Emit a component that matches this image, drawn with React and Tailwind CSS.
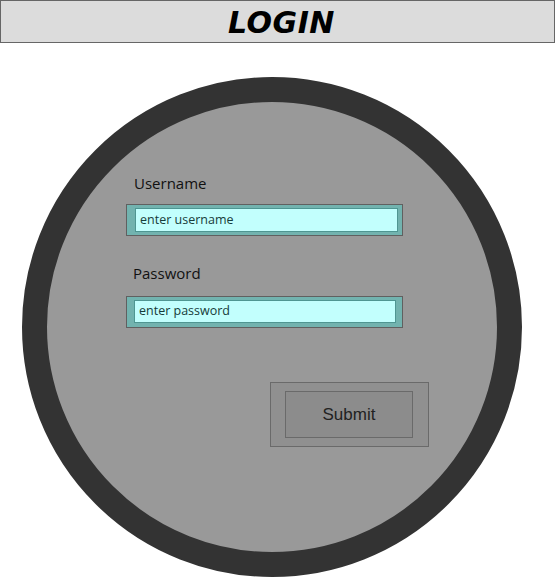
export default function App() {
  return (
    <div className="w-[556px] h-[578px] bg-white overflow-hidden">
      <div className="h-[43px] w-[555px] bg-[#dcdcdc] border border-[#666666] flex items-center justify-center pl-[8px] pt-[2px]">
        <h1 className="text-[30px] leading-none font-bold italic text-black tracking-[0.5px]" style={{ fontFamily: '"DejaVu Sans", sans-serif' }}>
          LOGIN
        </h1>
      </div>
      <div className="ml-[22px] mt-[34px] w-[500px] h-[500px] rounded-full border-[25px] border-[#333333] bg-[#999999]">
        <div className="flex flex-col pt-[71px] text-[#1a1a1a]" style={{ fontFamily: '"Open Sans", sans-serif' }}>
          <label className="ml-[87px] text-[15px] leading-[20px] text-[#111] font-medium">Username</label>
          <div className="ml-[79px] mt-[11px] w-[277px] h-[32px] bg-[#72b3af] border border-[#606060] pl-[8px] pr-[4px] pt-[3px] pb-[3px]">
            <div className="h-full bg-[#c2fffd] border border-[#4f9692] flex items-center pl-[4px] text-[12.5px] text-[#163c3a]">
              enter username
            </div>
          </div>
          <label className="ml-[86px] mt-[27px] text-[15px] leading-[20px] text-[#111] font-medium">Password</label>
          <div className="ml-[79px] mt-[13px] w-[277px] h-[32px] bg-[#72b3af] border border-[#606060] pl-[7px] pr-[6px] pt-[3px] pb-[4px]">
            <div className="h-full bg-[#c2fffd] border border-[#4f9692] flex items-center pl-[4px] text-[12.5px] text-[#163c3a]">
              enter password
            </div>
          </div>
          <div className="ml-[223px] mt-[54px] w-[159px] h-[65px] bg-[#909090] border border-[#6a6a6a] px-[14px] pt-[8px] pb-[8px]">
            <button className="w-[128px] h-[47px] bg-[#8c8c8c] border border-[#6a6a6a] flex items-center justify-center text-[17px] text-[#222]" style={{ fontFamily: '"Liberation Sans", Arial, sans-serif' }}>
              Submit
            </button>
          </div>
        </div>
      </div>
    </div>
  );
}
